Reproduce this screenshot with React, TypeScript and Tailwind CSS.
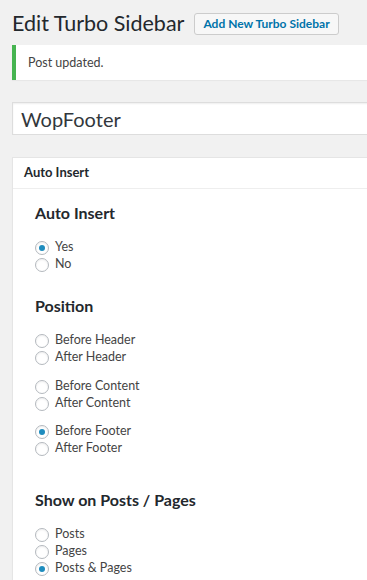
import React from "react";

const Radio = ({ label, checked = false }: { label: string; checked?: boolean }) => (
  <label className="flex h-[17px] items-center gap-[6px]">
    <span className="flex h-[14px] w-[14px] items-center justify-center rounded-full border border-[#b4b9be] bg-white shadow-[inset_0_1px_2px_rgba(0,0,0,0.07)]">
      {checked && <span className="h-[6px] w-[6px] rounded-full bg-[#1e8cbe]" />}
    </span>
    <span className="text-[12.5px] text-[#444]">{label}</span>
  </label>
);

const Heading = ({ children, className = "" }: { children: React.ReactNode; className?: string }) => (
  <h3 className={`h-5 text-[16px] font-bold leading-5 text-[#23282d] ${className}`}>{children}</h3>
);

export default function App() {
  return (
    <div className="h-[580px] w-[367px] overflow-hidden bg-[#f1f1f1] font-['Lato','Open_Sans',sans-serif]">
      <div className="w-[440px] pl-3 pt-[9px]">
        {/* Title row */}
        <div className="flex items-center gap-[10px]">
          <h1 className="text-[21.5px] leading-[29px] text-[#23282d]">Edit Turbo Sidebar</h1>
          <button className="h-[22px] rounded-[3px] border border-[#ccc] bg-[#f7f7f7] px-2 text-[12px] font-bold leading-5 text-[#0073aa]">
            Add New Turbo Sidebar
          </button>
        </div>

        {/* Notice */}
        <div className="mt-[7px] border-l-4 border-[#46b450] bg-white py-2 pl-3 shadow-[0_1px_1px_rgba(0,0,0,0.04)]">
          <p className="text-[12.5px] leading-[19px] text-[#444]">Post updated.</p>
        </div>

        {/* Title input */}
        <div className="mt-[22px] flex h-[33px] items-center border border-[#ddd] bg-white pl-2 shadow-[inset_0_1px_2px_rgba(0,0,0,0.07)]">
          <span className="text-[20px] text-[#32373c]">WopFooter</span>
        </div>

        {/* Postbox */}
        <div className="mt-[22px] border border-[#e5e5e5] bg-white shadow-[0_1px_1px_rgba(0,0,0,0.04)]">
          <div className="flex h-[31px] items-center border-b border-[#eee] pl-[11px]">
            <h2 className="text-[13px] font-bold text-[#23282d]">Auto Insert</h2>
          </div>
          <div className="pl-[22px] pt-[14px] pb-6">
            <Heading>Auto Insert</Heading>
            <div className="mt-[16px] flex flex-col">
              <Radio label="Yes" checked />
              <Radio label="No" />
            </div>

            <Heading className="mt-[23px]">Position</Heading>
            <div className="mt-[16px] flex flex-col">
              <Radio label="Before Header" />
              <Radio label="After Header" />
            </div>
            <div className="mt-[12px] flex flex-col">
              <Radio label="Before Content" />
              <Radio label="After Content" />
            </div>
            <div className="mt-[11px] flex flex-col">
              <Radio label="Before Footer" checked />
              <Radio label="After Footer" />
            </div>

            <Heading className="mt-[33px]">Show on Posts / Pages</Heading>
            <div className="mt-[16px] flex flex-col">
              <Radio label="Posts" />
              <Radio label="Pages" />
              <Radio label="Posts & Pages" checked />
            </div>
          </div>
        </div>
      </div>
    </div>
  );
}
